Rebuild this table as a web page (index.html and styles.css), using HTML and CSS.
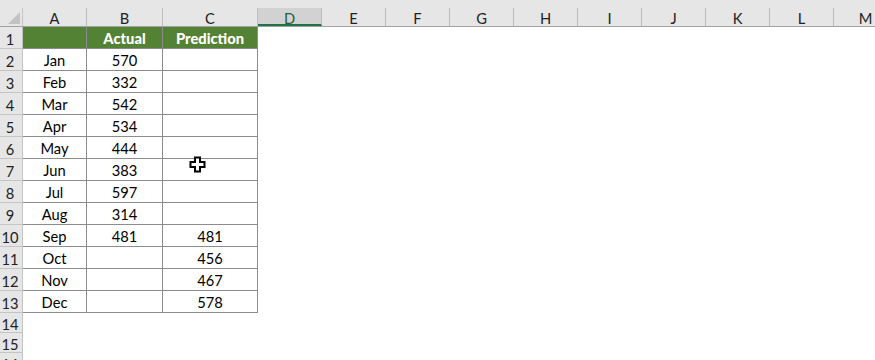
FILE: index.html
```html
<!DOCTYPE html>
<html>
<head>
<meta charset="utf-8">
<link rel="stylesheet" href="styles.css">
</head>
<body>
<div class="sheet">
  <div class="colhead">
    <div class="corner"><span class="tri"></span></div>
    <div class="ch wa">A</div>
    <div class="ch wb">B</div>
    <div class="ch wc">C</div>
    <div class="ch wd sel">D</div>
    <div class="ch wd">E</div>
    <div class="ch wd">F</div>
    <div class="ch wd">G</div>
    <div class="ch wd">H</div>
    <div class="ch wd">I</div>
    <div class="ch wd">J</div>
    <div class="ch wd">K</div>
    <div class="ch wd">L</div>
    <div class="ch wd">M</div>
  </div>

  <div class="row">
    <div class="rh">1</div>
    <div class="cell wa hd"></div>
    <div class="cell wb hd">Actual</div>
    <div class="cell wc hd">Prediction</div>
  </div>
  <div class="row"><div class="rh">2</div><div class="cell wa">Jan</div><div class="cell wb">570</div><div class="cell wc"></div></div>
  <div class="row"><div class="rh">3</div><div class="cell wa">Feb</div><div class="cell wb">332</div><div class="cell wc"></div></div>
  <div class="row"><div class="rh">4</div><div class="cell wa">Mar</div><div class="cell wb">542</div><div class="cell wc"></div></div>
  <div class="row"><div class="rh">5</div><div class="cell wa">Apr</div><div class="cell wb">534</div><div class="cell wc"></div></div>
  <div class="row"><div class="rh">6</div><div class="cell wa">May</div><div class="cell wb">444</div><div class="cell wc"></div></div>
  <div class="row"><div class="rh">7</div><div class="cell wa">Jun</div><div class="cell wb">383</div><div class="cell wc"></div></div>
  <div class="row"><div class="rh">8</div><div class="cell wa">Jul</div><div class="cell wb">597</div><div class="cell wc"></div></div>
  <div class="row"><div class="rh">9</div><div class="cell wa">Aug</div><div class="cell wb">314</div><div class="cell wc"></div></div>
  <div class="row"><div class="rh">10</div><div class="cell wa">Sep</div><div class="cell wb">481</div><div class="cell wc">481</div></div>
  <div class="row"><div class="rh">11</div><div class="cell wa">Oct</div><div class="cell wb"></div><div class="cell wc">456</div></div>
  <div class="row"><div class="rh">12</div><div class="cell wa">Nov</div><div class="cell wb"></div><div class="cell wc">467</div></div>
  <div class="row"><div class="rh">13</div><div class="cell wa">Dec</div><div class="cell wb"></div><div class="cell wc">578</div></div>
  <div class="row short"><div class="rh">14</div></div>
  <div class="row short"><div class="rh">15</div></div>
  <div class="row short"><div class="rh">16</div></div>

  <svg class="cursor" width="17" height="17" viewBox="0 0 17 17">
    <path d="M6 1.5h5v4.5h4.5v5h-4.5v4.5h-5v-4.5h-4.5v-5h4.5z" fill="#fff" stroke="#000" stroke-width="2" stroke-linejoin="miter"/>
  </svg>
</div>
</body>
</html>
```

FILE: styles.css
```css
html, body {
  margin: 0;
  padding: 0;
  background: #fff;
}

.sheet {
  position: relative;
  width: 875px;
  height: 360px;
  overflow: hidden;
  font-family: Lato, "Open Sans", "Liberation Sans", sans-serif;
  font-size: 14.7px;
  color: #000;
}

.colhead {
  display: flex;
  background: #e6e6e6;
  padding-top: 8px;
  border-bottom: 1px solid #a2a2a2;
  height: 18px;
}

.corner {
  position: relative;
  flex: 0 0 23px;
  width: 23px;
  height: 18px;
  box-sizing: border-box;
  border-right: 1px solid #c4c4c4;
}

.tri {
  position: absolute;
  right: 2px;
  bottom: 2px;
  width: 0;
  height: 0;
  border-left: 12px solid transparent;
  border-bottom: 12px solid #c2c2c2;
}

.ch {
  flex: 0 0 auto;
  height: 18px;
  box-sizing: border-box;
  border-right: 1px solid #bdbdbd;
  display: flex;
  align-items: center;
  justify-content: center;
  padding-top: 2px;
  color: #222;
  font-size: 14.7px;
}

.ch.sel {
  background: #d2d2d2;
  color: #1f5f3b;
  border-bottom: 2px solid #217346;
  padding-top: 3px;
}

.wa { width: 64px; flex: 0 0 64px; }
.wb { width: 76px; flex: 0 0 76px; }
.wc { width: 95px; flex: 0 0 95px; }
.wd { width: 64px; flex: 0 0 64px; }

.row {
  display: flex;
  height: 22px;
}

.row.short {
  height: 20px;
}

.rh {
  flex: 0 0 23px;
  width: 23px;
  box-sizing: border-box;
  background: #e6e6e6;
  border-right: 1px solid #c4c4c4;
  border-bottom: 1px solid #c4c4c4;
  display: flex;
  align-items: center;
  justify-content: center;
  padding-right: 2px;
  padding-top: 2px;
  color: #222;
}

.cell {
  box-sizing: border-box;
  height: 22px;
  border-right: 1px solid #8c8c8c;
  border-bottom: 1px solid #8c8c8c;
  display: flex;
  align-items: center;
  justify-content: center;
  padding-top: 1px;
}

.cell.hd {
  background: #548235;
  color: #fff;
  font-weight: 900;
  padding-top: 0;
}

.cursor {
  position: absolute;
  left: 189px;
  top: 156px;
}
```
